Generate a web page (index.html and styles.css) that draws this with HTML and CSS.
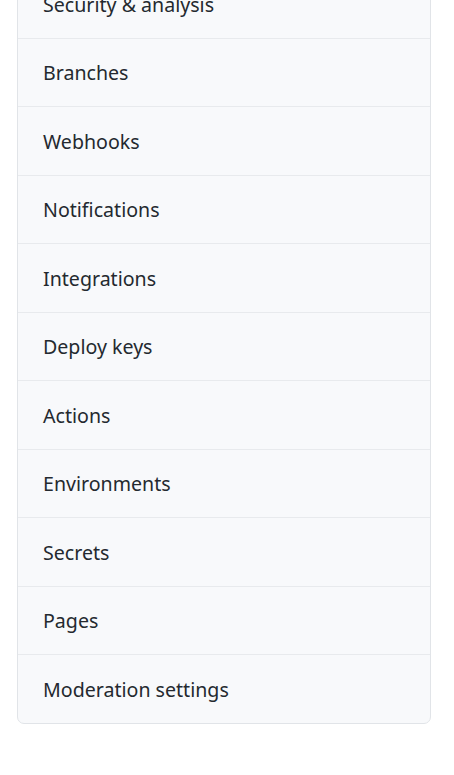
FILE: index.html
```html
<!DOCTYPE html>
<html>
<head>
<meta charset="utf-8">
<link rel="stylesheet" href="styles.css">
</head>
<body>
<nav class="menu">
  <a class="item">Security &amp; analysis</a>
  <a class="item">Branches</a>
  <a class="item">Webhooks</a>
  <a class="item">Notifications</a>
  <a class="item">Integrations</a>
  <a class="item">Deploy keys</a>
  <a class="item">Actions</a>
  <a class="item">Environments</a>
  <a class="item">Secrets</a>
  <a class="item">Pages</a>
  <a class="item">Moderation settings</a>
</nav>
</body>
</html>
```
FILE: styles.css
```css
html, body {
  margin: 0;
  padding: 0;
  background: #ffffff;
}
body {
  padding: 0 23px 0 17px;
  font-family: "Noto Sans", "Open Sans", sans-serif;
}
.menu {
  margin-top: -30.8px;
  display: flex;
  flex-direction: column;
  background: #f8f9fb;
  border: 1px solid #e1e4e8;
  border-radius: 7px;
  overflow: hidden;
}
.item {
  display: flex;
  align-items: center;
  height: 66.5px;
  padding: 1px 24px 0 25px;
  font-size: 19.6px;
  color: #24292f;
  border-top: 1px solid #e8eaed;
  box-sizing: content-box;
}
.item:first-child {
  border-top: none;
}
```
